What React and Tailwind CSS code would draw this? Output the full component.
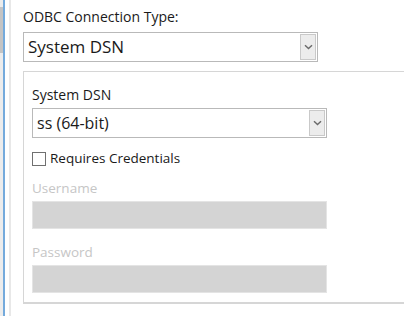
import React from "react";

function Chevron() {
  return (
    <svg width="9" height="6" viewBox="0 0 9 6" className="block">
      <path d="M1 1.2 L4.5 4.6 L8 1.2" fill="none" stroke="#6a6a6a" strokeWidth="1.4" />
    </svg>
  );
}

function Select({ text, width, textClass }) {
  return (
    <div
      className={`flex h-[30px] items-stretch border border-[#b9b9b9] bg-white ${width}`}
    >
      <div className={`flex flex-1 items-center pl-[4px] text-[#1a1a1a] ${textClass}`}>{text}</div>
      <div className="my-[1px] mr-[1px] flex w-[16px] items-center justify-center border border-[#c9c9c9] bg-[#ececec]">
        <Chevron />
      </div>
    </div>
  );
}

export default function App() {
  const font = { fontFamily: '"Open Sans", "Noto Sans", sans-serif' };
  return (
    <div className="flex h-[316px] w-[404px] overflow-hidden bg-white" style={font}>
      <div className="flex w-[3px] flex-col bg-[#ececec]">
        <div className="h-[7px]" />
        <div className="h-[46px] bg-[#c4c4c4]" />
      </div>
      <div className="w-[2px] bg-[#74aadc]" />
      <div className="w-[4px]" />
      <div className="w-[2px] bg-[#e8e8e8]" />
      <div className="flex min-w-0 flex-1 flex-col pl-[12px]">
        <div className="mt-[8px] h-[17px] text-[14px] leading-[17px] text-[#1a1a1a]">
          ODBC Connection Type:
        </div>
        <div className="mt-[7px]">
          <Select text="System DSN" width="w-[295px]" textClass="text-[17px]" />
        </div>
        <div className="mt-[9px] mr-[-20px] flex h-[233px] flex-col border border-b-2 border-[#d6d6d6] pl-[8px]">
          <div className="mt-[14px] h-[17px] text-[14px] leading-[17px] text-[#1a1a1a]">
            System DSN
          </div>
          <div className="mt-[5px]">
            <Select text="ss (64-bit)" width="w-[295px]" textClass="text-[16px]" />
          </div>
          <div className="mt-[13px] flex h-[15px] items-center">
            <div className="h-[14px] w-[14px] border border-[#707070] bg-white" />
            <div className="ml-[4px] text-[13.5px] leading-[15px] text-[#1a1a1a]">
              Requires Credentials
            </div>
          </div>
          <div className="mt-[14px] h-[17px] text-[13.5px] leading-[17px] text-[#c6c6c6]">
            Username
          </div>
          <div className="mt-[4px] h-[28px] w-[295px] border border-[#e4e4e4] bg-[#d4d4d4]" />
          <div className="mt-[15px] h-[17px] text-[13.5px] leading-[17px] text-[#c6c6c6]">
            Password
          </div>
          <div className="mt-[4px] h-[28px] w-[295px] border border-[#e4e4e4] bg-[#d4d4d4]" />
        </div>
      </div>
    </div>
  );
}
